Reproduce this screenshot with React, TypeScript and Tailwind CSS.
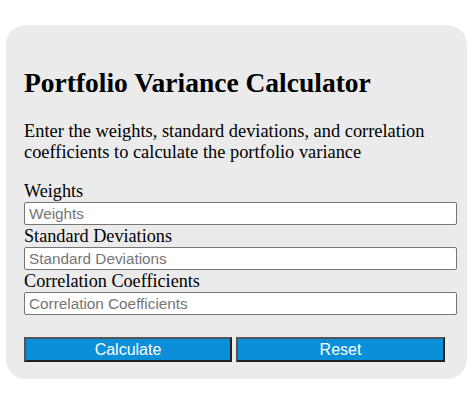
const fields = ["Weights", "Standard Deviations", "Correlation Coefficients"];

export default function App() {
  return (
    <div className="bg-white w-[474px] h-[411px] pt-[25px] px-[6px] font-['Liberation_Serif',serif] text-black">
      <div className="bg-[#ebebeb] rounded-[20px] px-[18px] pt-[20px] pb-[17px] w-[461px]">
        <h1 className="text-[27.5px] font-bold leading-[32px] mt-[22px] mb-[22px]">Portfolio Variance Calculator</h1>
        <p className="text-[18.4px] leading-[21px] mb-[17px]">
          Enter the weights, standard deviations, and correlation coefficients to calculate the portfolio variance
        </p>
        {fields.map((f) => (
          <div key={f} className="flex flex-col">
            <label className="text-[18.2px] leading-[22px]">{f}</label>
            <input
              placeholder={f}
              className="h-[23px] bg-white border border-[#767676] rounded-[2px] px-[4px] text-[15.3px] font-['Liberation_Sans',sans-serif] placeholder:text-[#757575] w-[433px]"
            />
          </div>
        ))}
        <div className="flex gap-[4px] mt-[22px]">
          <button className="w-[208px] h-[25px] bg-[#0a8fd8] border-2 border-[#222] border-t-[#555] border-l-[#555] text-white text-[16px] leading-none font-['Liberation_Sans',sans-serif]">
            Calculate
          </button>
          <button className="w-[209px] h-[25px] bg-[#0a8fd8] border-2 border-[#222] border-t-[#555] border-l-[#555] text-white text-[16px] leading-none font-['Liberation_Sans',sans-serif]">
            Reset
          </button>
        </div>
      </div>
    </div>
  );
}
